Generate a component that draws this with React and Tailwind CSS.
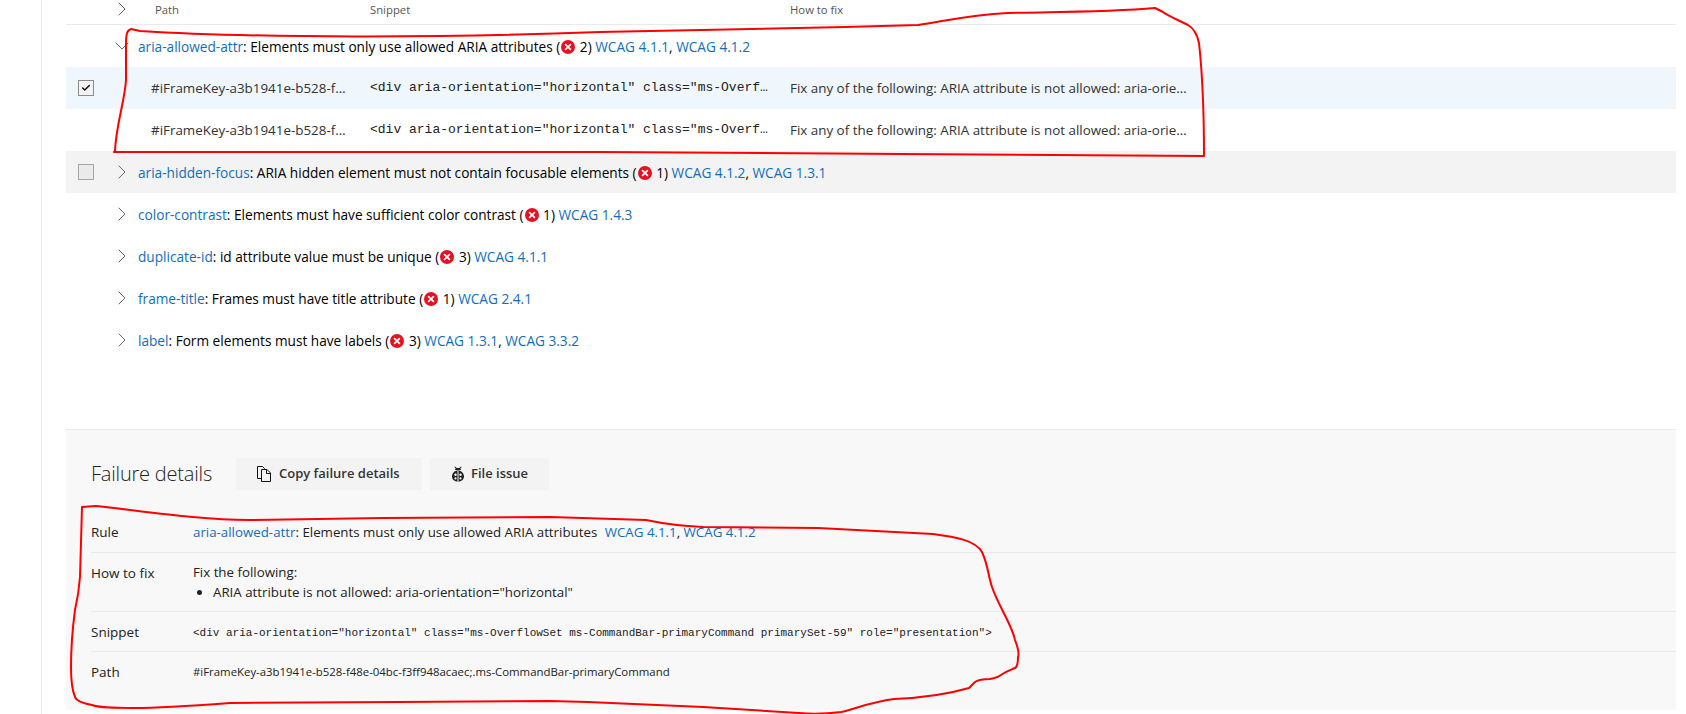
import React from 'react';
import { ChevronRight, ChevronDown, Check } from 'lucide-react';

const link = 'text-[#106ebe]';
const mono = "font-['Liberation_Mono',monospace]";

const rules = [
  { id: 'aria-hidden-focus', text: 'ARIA hidden element must not contain focusable elements', count: 1, wcag: ['WCAG 4.1.2', 'WCAG 1.3.1'], hover: true },
  { id: 'color-contrast', text: 'Elements must have sufficient color contrast', count: 1, wcag: ['WCAG 1.4.3'] },
  { id: 'duplicate-id', text: 'id attribute value must be unique', count: 3, wcag: ['WCAG 4.1.1'] },
  { id: 'frame-title', text: 'Frames must have title attribute', count: 1, wcag: ['WCAG 2.4.1'] },
  { id: 'label', text: 'Form elements must have labels', count: 3, wcag: ['WCAG 1.3.1', 'WCAG 3.3.2'] },
];

function ErrorIcon() {
  return (
    <svg width="14" height="14" viewBox="0 0 14 14" className="inline-block align-[-2px] mx-[1px]">
      <circle cx="7" cy="7" r="7" fill="#e81123" />
      <path d="M4.6 4.6l4.8 4.8M9.4 4.6l-4.8 4.8" stroke="#fff" strokeWidth="1.7" strokeLinecap="round" />
    </svg>
  );
}

function CopyIcon() {
  return (
    <svg width="14" height="16" viewBox="0 0 14 16" fill="none" stroke="#111" strokeWidth="1">
      <path d="M4.5 12.5h-4v-12h5l2 2v1" />
      <path d="M4.5 3.5h5.5l3.5 3.5v8.5h-9z" />
      <path d="M9.5 3.5v4h4" />
    </svg>
  );
}

function BugIcon() {
  return (
    <svg width="14" height="16" viewBox="0 0 14 16" fill="#222">
      <path d="M4 .5l1.8 1.6h2.4L10 .5l.6.6L9.3 2.6c.4.4.7.9.7 1.4H4c0-.5.3-1 .7-1.4L3.4 1.1z" />
      <path d="M7 4.6c3.4 0 6 2.7 6 6 0 3-2.7 5-6 5s-6-2-6-5c0-3.3 2.6-6 6-6z" />
      <path d="M7 5v10.500" stroke="#f8f8f8" strokeWidth="1" />
      <circle cx="4.500" cy="8.800" r="1.200" fill="#f8f8f8" />
      <circle cx="9.500" cy="8.800" r="1.200" fill="#f8f8f8" />
      <circle cx="4.500" cy="12.400" r="1.100" fill="#f8f8f8" />
      <circle cx="9.500" cy="12.400" r="1.100" fill="#f8f8f8" />
    </svg>
  );
}

function RuleText({ id, text, count, wcag }) {
  return (
    <p className="text-[13.650px] font-medium text-black whitespace-nowrap pt-[2px]">
      <span className={link}>{id}</span>: {text} (<ErrorIcon /> {count}){' '}
      {wcag.map((w, i) => (
        <span key={w}>
          {i > 0 && ', '}
          <span className={link}>{w}</span>
        </span>
      ))}
    </p>
  );
}

function ResultRow({ selected }) {
  return (
    <div className={`flex items-center h-[42px] text-[13.400px] text-[#333] ${selected ? 'bg-[#eff6fc]' : ''}`}>
      <div className="w-[85px] pl-3 shrink-0">
        {selected && (
          <div className="w-4 h-4 border border-[#8a8a8a] bg-[#f3f3f3] flex items-center justify-center">
            <Check size={10} strokeWidth={3.500} color="#111" />
          </div>
        )}
      </div>
      <div className="w-[219px] shrink-0 whitespace-nowrap">#iFrameKey-a3b1941e-b528-f…</div>
      <div className={`w-[420px] shrink-0 whitespace-nowrap text-[13px] text-[#222] ${mono}`}>{'<div aria-orientation="horizontal" class="ms-Overf…'}</div>
      <div className="whitespace-nowrap">Fix any of the following: ARIA attribute is not allowed: aria-orie…</div>
    </div>
  );
}

function DetailRow({ label, height, last, children }) {
  return (
    <div className={`flex items-center ${height} ${last ? '' : 'border-b border-[#eaeaea]'}`}>
      <div className="w-[102px] shrink-0 text-[13.500px] text-[#222] self-start mt-[10px]">{label}</div>
      <div className="flex-1 text-[13.300px] text-[#222]">{children}</div>
    </div>
  );
}

export default function App() {
  return (
    <div className="relative w-[1686px] h-[714px] bg-white overflow-hidden flex font-['Open_Sans',sans-serif]">
      <div className="w-[42px] h-full border-r border-[#eaeaea] shrink-0" />
      <div className="w-[1610px] ml-[24px] flex flex-col">
        {/* Table header */}
        <div className="flex items-center h-[25px] pb-[4px] border-b border-[#eaeaea] text-[11.300px] text-[#555]">
          <div className="w-[89px] shrink-0 pl-[44px]">
            <ChevronRight size={24} strokeWidth={1} color="#666" className="-mt-[2px]" />
          </div>
          <div className="w-[215px] shrink-0">Path</div>
          <div className="w-[420px] shrink-0">Snippet</div>
          <div>How to fix</div>
        </div>

        {/* Expanded rule */}
        <div className="flex items-center h-[42px]">
          <div className="w-[72px] shrink-0 pl-[44px]">
            <ChevronDown size={24} strokeWidth={1} color="#666" />
          </div>
          <RuleText id="aria-allowed-attr" text="Elements must only use allowed ARIA attributes" count={2} wcag={['WCAG 4.1.1', 'WCAG 4.1.2']} />
        </div>
        <ResultRow selected />
        <ResultRow />

        {/* Collapsed rules */}
        {rules.map((r) => (
          <div key={r.id} className={`flex items-center h-[42px] ${r.hover ? 'bg-[#f3f3f3]' : ''}`}>
            <div className="w-[72px] shrink-0 pl-3 flex items-center">
              <div className={`w-4 h-4 shrink-0 ${r.hover ? 'border border-[#a6a6a6] bg-[#eaeaea]' : ''}`} />
              <ChevronRight size={24} strokeWidth={1} color="#666" className="ml-4 shrink-0" />
            </div>
            <RuleText {...r} />
          </div>
        ))}

        {/* Failure details */}
        <div className="mt-[68px] h-[281px] bg-[#f8f8f8] border-t border-[#eaeaea] pt-[28px] pl-[25px]">
          <div className="flex items-center h-[32px]">
            <h2 className="w-[145px] text-[20px] font-light tracking-[-0.2px] text-[#222] whitespace-nowrap">Failure details</h2>
            <button className="w-[186px] h-8 bg-[#f3f3f3] flex items-center pl-[21px] gap-2 text-[13px] font-semibold text-[#333]">
              <CopyIcon />
              Copy failure details
            </button>
            <button className="w-[119px] h-8 ml-2 bg-[#f3f3f3] flex items-center pl-[21px] gap-1.5 text-[13px] font-semibold text-[#333]">
              <BugIcon />
              File issue
            </button>
          </div>

          <div className="mt-[22px]">
            <DetailRow label="Rule" height="h-[41px]">
              <p className="pt-[2px]">
                <span className={link}>aria-allowed-attr</span>: Elements must only use allowed ARIA attributes{' '}
                <span className={`ml-1 ${link}`}>WCAG 4.1.1</span>, <span className={link}>WCAG 4.1.2</span>
              </p>
            </DetailRow>
            <DetailRow label="How to fix" height="h-[59px]">
              <div className="pt-[2px]">
                <p>Fix the following:</p>
                <ul className="list-disc pl-[20px]">
                  <li>ARIA attribute is not allowed: aria-orientation="horizontal"</li>
                </ul>
              </div>
            </DetailRow>
            <DetailRow label="Snippet" height="h-[40px]">
              <span className={`text-[11px] ${mono}`}>
                {'<div aria-orientation="horizontal" class="ms-OverflowSet ms-CommandBar-primaryCommand primarySet-59" role="presentation">'}
              </span>
            </DetailRow>
            <DetailRow label="Path" height="h-[40px]" last>
              <span className="text-[11.400px]">#iFrameKey-a3b1941e-b528-f48e-04bc-f3ff948acaec;.ms-CommandBar-primaryCommand</span>
            </DetailRow>
          </div>
        </div>
      </div>

      {/* Hand-drawn red annotations */}
      <svg className="absolute inset-0 pointer-events-none" width="1686" height="714" fill="none" stroke="#f00" strokeWidth="2" strokeLinejoin="round">
        <path d="M140 31 L131 29 C127 30 126 34 126 45 L126 80 C125 100 116 125 115 151 L114 152 L600 152 L900 154 L1204 156 C1204 120 1202 70 1199 43 C1197 33 1193 28 1188 25 C1178 20 1168 16 1163 12 L1155 8 C1110 12 1050 12 1008 13 C970 15 950 20 918 25 L845 27 L600 32 C450 38 250 38 140 31 Z" />
        <path d="M82 507 L96 506 C150 512 200 520 249 520 L383 518 L550 517 L646 520 C665 524 680 526 703 527 L818 528 L933 534 C955 537 975 540 982 552 C988 565 988 575 992 587 C998 605 1012 625 1015 640 C1018 648 1019 655 1018 657 C1018 665 1017 667 1015 668 C1008 671 1005 672 1001 675 C996 679 992 678 990 679 C983 679 978 680 975 682 L969 688 C945 695 920 698 894 699 C870 702 855 709 841 712 C825 714 810 714 799 713 L703 707 L588 702 L550 701 L400 702 L230 703 C190 706 160 708 134 708 C115 708 100 708 92 705 C82 703 76 701 75 697 C72 690 71 680 71 667 C71 645 73 625 75 610 C78 597 79 590 80 577 L82 507 Z" />
      </svg>
    </div>
  );
}
